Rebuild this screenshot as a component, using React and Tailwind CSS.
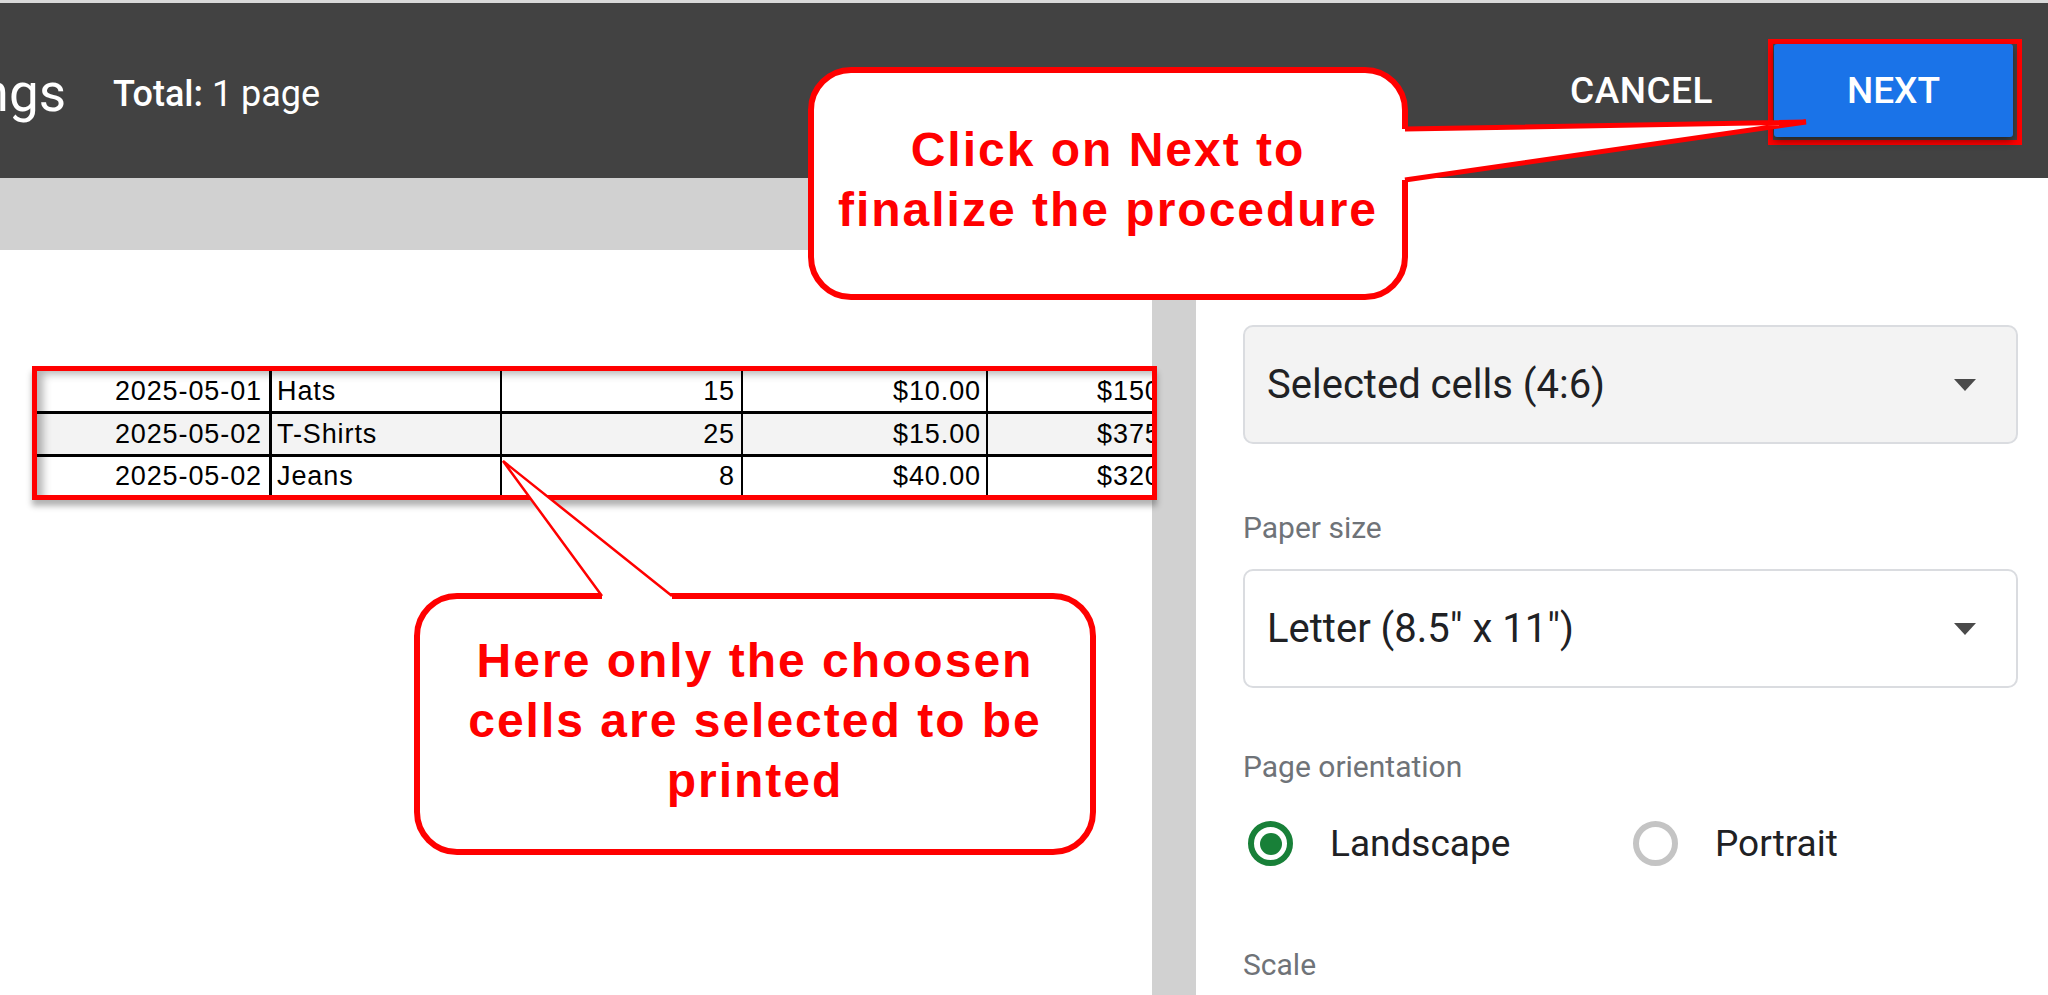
const rows = [
  { date: "2025-05-01", item: "Hats", qty: "15", price: "$10.00", total: "$150.00", cls: "h-[43px] border-b-[3px] bg-white" },
  { date: "2025-05-02", item: "T-Shirts", qty: "25", price: "$15.00", total: "$375.00", cls: "h-[43px] border-b-[3px] bg-[#f3f3f3]" },
  { date: "2025-05-02", item: "Jeans", qty: "8", price: "$40.00", total: "$320.00", cls: "h-[38px] bg-white" },
];

function Caret() {
  return (
    <svg width="22" height="12" viewBox="0 0 22 12">
      <polygon points="0,0 22,0 11,12" fill="#4a4a4a" />
    </svg>
  );
}

function Select({ label, filled }) {
  return (
    <div
      className={`flex h-[119px] items-center justify-between rounded-[10px] border-2 border-[#dadce0] pl-[22px] pr-[40px] ${
        filled ? "bg-[#f3f3f3]" : "bg-white"
      }`}
    >
      <span className="text-[40px] text-[#202124]">{label}</span>
      <Caret />
    </div>
  );
}

function Radio({ checked, label }) {
  return (
    <div className="flex w-[385px] items-center gap-[37px]">
      <span
        className={`flex h-[45px] w-[45px] items-center justify-center rounded-full border-[6px] ${
          checked ? "border-[#188038]" : "border-[#c4c4c4]"
        }`}
      >
        {checked && <span className="h-[22px] w-[22px] rounded-full bg-[#188038]" />}
      </span>
      <span className="text-[37px] text-[#202124]">{label}</span>
    </div>
  );
}

function Callouts() {
  return (
    <>
      <svg className="pointer-events-none absolute left-0 top-0" width="2048" height="995">
        {/* next-button callout */}
        <rect x="811" y="70" width="594" height="227" rx="40" fill="#fff" stroke="#ff0000" strokeWidth="6" />
        <polygon points="1399,129 1405,129 1806,122 1405,180 1399,180" fill="#fff" />
        <polyline points="1405,129 1806,122 1405,180" fill="none" stroke="#ff0000" strokeWidth="5" />

        {/* selected cells callout */}
        <rect x="417" y="596" width="676" height="256" rx="40" fill="#fff" stroke="#ff0000" strokeWidth="6" />
        <polygon points="602,602 602,596 503,461 672,596 672,602" fill="#fff" />
        <polyline points="602,596 503,461 672,596" fill="none" stroke="#ff0000" strokeWidth="2.5" />
      </svg>

      <div className="absolute left-[811px] top-[120px] w-[594px] text-center font-['Liberation_Sans',Arial,sans-serif] text-[48px] font-bold leading-[60px] tracking-[2px] text-[#ff0000]">
        Click on Next to
        <br />
        finalize the procedure
      </div>
      <div className="absolute left-[417px] top-[631px] w-[676px] text-center font-['Liberation_Sans',Arial,sans-serif] text-[48px] font-bold leading-[60px] tracking-[2px] text-[#ff0000]">
        Here only the choosen
        <br />
        cells are selected to be
        <br />
        printed
      </div>
    </>
  );
}

export default function App() {
  return (
    <div className="relative h-[995px] w-[2048px] overflow-hidden bg-white font-['Roboto',sans-serif]">
      <div className="h-[3px] bg-[#d9d9d9]" />

      <header className="flex h-[175px] items-center bg-[#424242] text-white">
        <div className="flex w-[66px] shrink-0 justify-end overflow-hidden">
          <span className="mt-[5px] shrink-0 whitespace-nowrap text-[53px] leading-[64px]">Print settings</span>
        </div>
        <span className="ml-[47px] mt-[6px] text-[36px]">
          <span className="font-medium">Total:</span> 1 page
        </span>
        <div className="flex-1" />
        <span className="text-[37px] font-medium tracking-[0.5px]">CANCEL</span>
        <div className="ml-[55px] mr-[26px] mt-[3px] border-[5px] border-[#ff0000] pb-[3px] pl-[1px] pr-[4px]">
          <div className="flex h-[93px] w-[239px] items-center justify-center rounded-[3px] bg-[#1a73e8] text-[37px] font-medium shadow-[0_4px_8px_rgba(0,0,0,0.45)]">
            NEXT
          </div>
        </div>
      </header>

      <div className="flex h-[817px]">
        <div className="w-[1196px] shrink-0 bg-[#d1d1d1] pt-[72px]">
          <div className="h-full w-[1152px] bg-white pl-[32px] pt-[116px]">
            <div className="relative w-[1125px] overflow-hidden border-[5px] border-[#ff0000] bg-white font-['Liberation_Sans',Arial,sans-serif] text-[27px] tracking-[0.9px] text-black shadow-[0_6px_6px_rgba(0,0,0,0.3)]">
              {rows.map((r, i) => (
                <div key={i} className={`flex border-black ${r.cls}`}>
                  <div className="flex w-[235px] shrink-0 items-center justify-end border-r-[3px] border-black pr-[7px]">{r.date}</div>
                  <div className="flex w-[230px] shrink-0 items-center border-r-[2px] border-black pl-[5px]">{r.item}</div>
                  <div className="flex w-[241px] shrink-0 items-center justify-end border-r-[2px] border-black pr-[6px]">{r.qty}</div>
                  <div className="flex w-[245px] shrink-0 items-center justify-end border-r-[2px] border-black pr-[5px]">{r.price}</div>
                  <div className="flex w-[245px] shrink-0 items-center justify-end pr-[32px]">{r.total}</div>
                </div>
              ))}
              <div className="pointer-events-none absolute inset-0 shadow-[inset_12px_9px_9px_-6px_rgba(0,0,0,0.3)]" />
            </div>
          </div>
        </div>

        <aside className="flex-1 pl-[47px] pr-[36px] pt-[147px]">
          <Select label="Selected cells (4:6)" filled />
          <div className="mt-[66px] text-[30px] leading-[36px] text-[#6f7378]">Paper size</div>
          <div className="mt-[23px]">
            <Select label={'Letter (8.5" x 11")'} />
          </div>
          <div className="mt-[61px] text-[30px] leading-[36px] text-[#6f7378]">Page orientation</div>
          <div className="mt-[31px] flex pl-[5px]">
            <Radio checked label="Landscape" />
            <Radio label="Portrait" />
          </div>
          <div className="mt-[75px] text-[30px] leading-[36px] text-[#6f7378]">Scale</div>
        </aside>
      </div>

      <Callouts />
    </div>
  );
}
